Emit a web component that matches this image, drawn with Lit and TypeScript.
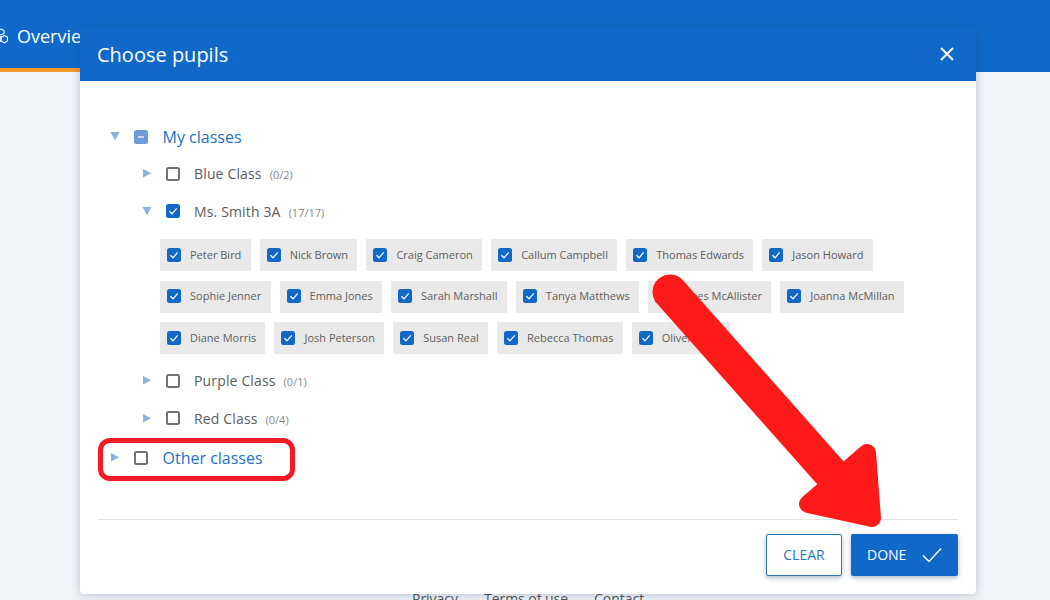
import { LitElement, html, css, svg } from "lit";
import { customElement } from "lit/decorators.js";

const PUPILS = [
  "Peter Bird", "Nick Brown", "Craig Cameron", "Callum Campbell", "Thomas Edwards", "Jason Howard",
  "Sophie Jenner", "Emma Jones", "Sarah Marshall", "Tanya Matthews", "James McAllister", "Joanna McMillan",
  "Diane Morris", "Josh Peterson", "Susan Real", "Rebecca Thomas", "Oliver Scott",
];

const caret = (open: boolean) => html`<svg class="caret" viewBox="0 0 10 10" width="10" height="10">
  ${open ? svg`<path d="M0.5 1 H9.5 L5 9.5 Z" fill="#8db2dc"/>` : svg`<path d="M1 1 V9.5 L9.2 5.2 Z" fill="#8db2dc"/>`}
</svg>`;

const box = (state: "off" | "on" | "mixed") => {
  if (state === "on")
    return html`<span class="box on"><svg viewBox="0 0 14 14" width="14" height="14"><path d="M3.4 7.3 L6 9.8 L10.7 4.4" fill="none" stroke="#fff" stroke-width="1.2"/></svg></span>`;
  if (state === "mixed")
    return html`<span class="box mixed"><svg viewBox="0 0 14 14" width="14" height="14"><path d="M4 7 H10" fill="none" stroke="#dbe7f5" stroke-width="1.6"/></svg></span>`;
  return html`<span class="box off"></span>`;
};

@customElement("app-root")
export class AppRoot extends LitElement {
  static styles = css`
    :host { display: block; width: 1050px; height: 600px; overflow: hidden; position: relative; background: #f0f4f8; font-family: "Open Sans", sans-serif; }
    .top { height: 72px; background: #1069c9; display: flex; align-items: flex-end; }
    .tab { height: 72px; width: 80px; box-sizing: border-box; border-bottom: 4px solid #f39a26; display: flex; align-items: center; gap: 9px; color: #fff; font-size: 18px; overflow: hidden; padding-top: 3px; white-space: nowrap; }
    .tab svg { margin-left: -6px; flex: none; }
    .page-links { position: absolute; left: 412px; top: 589px; display: flex; gap: 26px; font-size: 14px; letter-spacing: -.03px; color: #555; line-height: 20px; }
    .modal { position: absolute; left: 80px; top: 27px; width: 896px; height: 567px; background: #fff; border-radius: 0 0 4px 4px; box-shadow: 0 1px 8px rgba(40, 70, 110, .28); display: flex; flex-direction: column; }
    .head { height: 54px; flex: none; background: #1068c8; color: #fff; display: flex; align-items: center; justify-content: space-between; padding: 0 22px 0 17px; font-size: 20px; }
    .head svg { display: block; }
    .body { flex: 1; padding: 38px 18px 0 30px; }
    .row { display: flex; align-items: center; white-space: nowrap; }
    .row .caret { flex: none; }
    .l1 { height: 36px; }
    .l1 .caret { margin-bottom: 3px; }
    .l1 .box { margin-left: 14px; }
    .l1 .name { margin-left: 14.5px; font-size: 16px; color: #1e71c4; }
    .l1.last { margin-top: 3px; }
    .l2 { height: 37.5px; padding-left: 32px; }
    .l2 .caret { margin-bottom: 1px; }
    .l2 .box { margin-left: 14px; }
    .l2 .name { margin-left: 14px; font-size: 14px; color: #5d5d5d; letter-spacing: .15px; }
    .count { margin-left: 8px; font-size: 11px; color: #8a8a8a; margin-top: 2px; }
    .box { width: 14px; height: 14px; border-radius: 2.5px; box-sizing: border-box; flex: none; display: block; }
    .box svg { display: block; }
    .box.off { border: 2px solid #727272; background: #fff; }
    .box.on { background: #1168c6; }
    .box.mixed { background: #6d9dd8; }
    .chips { margin: 9px 0 8px 50px; display: flex; flex-wrap: wrap; gap: 9.5px 9px; width: 798px; }
    .chip { height: 32px; box-sizing: border-box; background: #e9e9e9; display: flex; align-items: center; gap: 9px; padding: 0 9.3px 0 7px; font-size: 11px; color: #5f5f5f; white-space: nowrap; }
    .chip > span:last-child { margin-bottom: 2px; }
    .chip .box { margin-bottom: 1px; }
    .foot { flex: none; margin: 0 18px; height: 75px; box-sizing: border-box; border-top: 1px solid #e4e4e4; padding-top: 14px; display: flex; justify-content: flex-end; gap: 9px; }
    .btn { height: 42px; box-sizing: border-box; border-radius: 2px; font-size: 14px; display: flex; align-items: center; box-shadow: 0 2px 5px rgba(30, 60, 100, .35); }
    .btn span { margin-bottom: 2px; }
    .clear { width: 76px; justify-content: center; background: #fff; border: 1px solid #2f77bd; color: #2f77bd; }
    .done { width: 107px; padding-left: 16px; gap: 16px; background: #1068c8; color: #fff; }
    .done svg { display: block; }
    .ring { position: absolute; left: 98px; top: 438px; width: 197px; height: 43px; box-sizing: border-box; border: 5px solid #ee1c25; border-radius: 12px; }
    .arrow { position: absolute; left: 0; top: 0; width: 1050px; height: 600px; pointer-events: none; }
  `;

  render() {
    return html`
      <div class="top">
        <div class="tab">
          <svg viewBox="0 0 14 16" width="14" height="16" fill="none" stroke="#fff" stroke-width="1.1">
            <path d="M7 1 L10 2.5 V5.5 L7 7 L4 5.5 V2.5 Z"/><path d="M3.5 7.5 L7 9.2 V13 L3.5 14.8 L0.5 13 V9.2 Z"/><path d="M10.5 7.5 L13.5 9.2 V13 L10.5 14.8 L7 13 V9.2 Z"/>
          </svg>
          <span>Overview</span>
        </div>
      </div>
      <div class="page-links"><span>Privacy</span><span>Terms of use</span><span>Contact</span></div>
      <div class="modal">
        <div class="head">
          <span>Choose pupils</span>
          <svg viewBox="0 0 14 14" width="14" height="14"><path d="M1 1 L13 13 M13 1 L1 13" stroke="#fff" stroke-width="2" fill="none"/></svg>
        </div>
        <div class="body">
          <div class="row l1">${caret(true)}${box("mixed")}<span class="name">My classes</span></div>
          <div class="row l2">${caret(false)}${box("off")}<span class="name">Blue Class</span><span class="count">(0/2)</span></div>
          <div class="row l2">${caret(true)}${box("on")}<span class="name">Ms. Smith 3A</span><span class="count">(17/17)</span></div>
          <div class="chips">
            ${PUPILS.map((p) => html`<div class="chip">${box("on")}<span>${p}</span></div>`)}
          </div>
          <div class="row l2">${caret(false)}${box("off")}<span class="name">Purple Class</span><span class="count">(0/1)</span></div>
          <div class="row l2">${caret(false)}${box("off")}<span class="name">Red Class</span><span class="count">(0/4)</span></div>
          <div class="row l1 last">${caret(false)}${box("off")}<span class="name">Other classes</span></div>
        </div>
        <div class="foot">
          <div class="btn clear"><span>CLEAR</span></div>
          <div class="btn done"><span>DONE</span>
            <svg viewBox="0 0 20 16" width="20" height="16"><path d="M1 8.5 L7 14.5 L19 1.5" fill="none" stroke="#fff" stroke-width="1.4"/></svg>
          </div>
        </div>
      </div>
      <div class="ring"></div>
      <svg class="arrow" viewBox="0 0 1050 600">
        <path d="M670 292 L835 478" stroke="#ff1a1a" stroke-width="35" stroke-linecap="round" fill="none"/>
        <path d="M867 453 L872 518 L808 504 Z" fill="#ff1a1a" stroke="#ff1a1a" stroke-width="18" stroke-linejoin="round"/>
      </svg>
    `;
  }
}
